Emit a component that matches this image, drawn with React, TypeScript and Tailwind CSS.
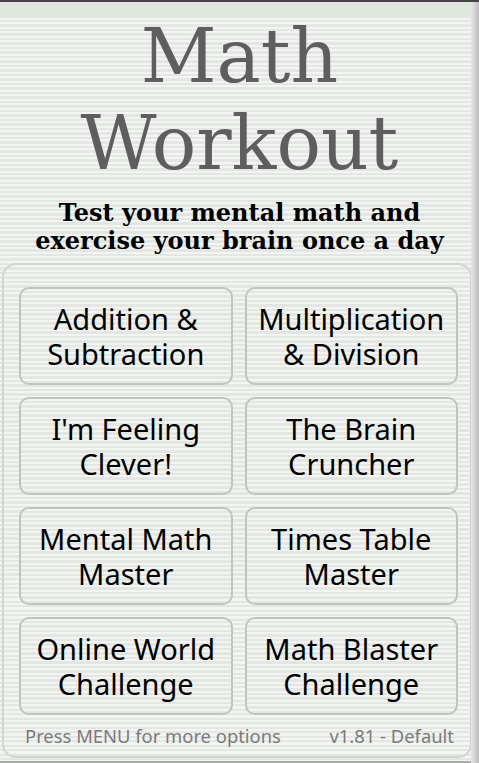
// Main menu for the Math Workout game: title, tagline, a 2x4 grid of mode
// buttons inside a rounded panel, and a footer hint line.

const modes: [string, string][] = [
  ['Addition &', 'Subtraction'],
  ['Multiplication', '& Division'],
  ["I'm Feeling", 'Clever!'],
  ['The Brain', 'Cruncher'],
  ['Mental Math', 'Master'],
  ['Times Table', 'Master'],
  ['Online World', 'Challenge'],
  ['Math Blaster', 'Challenge'],
];

const stripes =
  'bg-[repeating-linear-gradient(to_bottom,#f3f5f3_0px,#f3f5f3_2px,#e3e6e3_2px,#e3e6e3_4.5px)]';

function ModeButton({ lines }: { lines: [string, string] }) {
  return (
    <button
      type="button"
      className={`flex h-[98px] items-center justify-center rounded-[10px] border-2 border-[#c2c4c2] ${stripes} text-center text-[29px] leading-[35px] text-black`}
    >
      <span>
        {lines[0]}
        <br />
        {lines[1]}
      </span>
    </button>
  );
}

export default function App() {
  return (
    <div
      className={`relative flex h-[763px] w-[479px] flex-col overflow-hidden ${stripes}`}
      style={{ fontFamily: '"Noto Sans", "Open Sans", sans-serif' }}
    >
      <div className="h-[2px] bg-[#454545]" />
      {/* status-bar-ish tint strip */}
      <div className="h-[16px] bg-[#dfe7df]" />

      <h1
        className="-mt-[5px] text-center text-[74px] leading-[87px] text-[#5e5e5e]"
        style={{ fontFamily: '"DejaVu Serif", serif' }}
      >
        Math
        <br />
        Workout
      </h1>

      <p
        className="mt-[12px] text-center text-[24px] font-bold leading-[28px] text-black"
        style={{ fontFamily: '"DejaVu Serif", serif' }}
      >
        Test your mental math and
        <br />
        exercise your brain once a day
      </p>

      <div className="mb-[3px] ml-[2px] mr-[7px] mt-[8px] flex flex-1 flex-col rounded-[14px] border-2 border-[#d3d5d3] pl-[15px] pr-[12px] pt-[22px]">
        <div className="grid grid-cols-2 gap-[12px]">
          {modes.map((m) => (
            <ModeButton key={m.join(' ')} lines={m} />
          ))}
        </div>
        <div className="mt-[7px] flex justify-between pl-[6px] pr-[4px] text-[18.4px] text-[#7a7a7a]">
          <span>Press MENU for more options</span>
          <span>v1.81 - Default</span>
        </div>
      </div>
      <div className="h-[2px] bg-[#a9aba9]" />

      {/* scroll shade along the right edge */}
      <div className="pointer-events-none absolute bottom-0 right-0 top-[2px] w-[8px] bg-[linear-gradient(to_right,#e6e6e6,#bdbdbd)]" />
    </div>
  );
}
